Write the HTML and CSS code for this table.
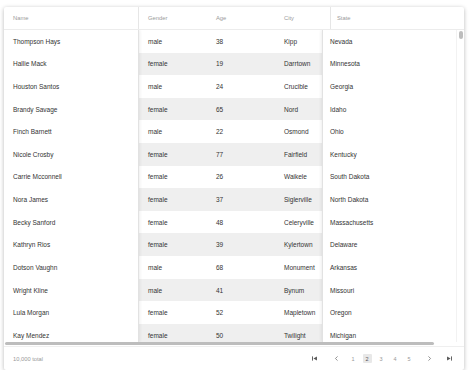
FILE: index.html
```html
<!DOCTYPE html>
<html>
<head>
<meta charset="utf-8">
<link rel="stylesheet" href="styles.css">
</head>
<body>
<div class="card">
  <div class="thead">
    <div class="th-left"><span class="th">Name</span></div>
    <div class="th-mid">
      <span class="th col">Gender</span>
      <span class="th col">Age</span>
      <span class="th col">City</span>
    </div>
    <div class="th-right"><span class="th">State</span></div>
  </div>
  <div class="tbody">
    <div class="pin-left">
      <div class="cell">Thompson Hays</div>
      <div class="cell">Hallie Mack</div>
      <div class="cell">Houston Santos</div>
      <div class="cell">Brandy Savage</div>
      <div class="cell">Finch Barnett</div>
      <div class="cell">Nicole Crosby</div>
      <div class="cell">Carrie Mcconnell</div>
      <div class="cell">Nora James</div>
      <div class="cell">Becky Sanford</div>
      <div class="cell">Kathryn Rios</div>
      <div class="cell">Dotson Vaughn</div>
      <div class="cell">Wright Kline</div>
      <div class="cell">Lula Morgan</div>
      <div class="cell">Kay Mendez</div>
    </div>
    <div class="mid">
      <div class="row"><span class="c">male</span><span class="c">38</span><span class="c">Kipp</span></div>
      <div class="row odd"><span class="c">female</span><span class="c">19</span><span class="c">Darrtown</span></div>
      <div class="row"><span class="c">male</span><span class="c">24</span><span class="c">Crucible</span></div>
      <div class="row odd"><span class="c">female</span><span class="c">65</span><span class="c">Nord</span></div>
      <div class="row"><span class="c">male</span><span class="c">22</span><span class="c">Osmond</span></div>
      <div class="row odd"><span class="c">female</span><span class="c">77</span><span class="c">Fairfield</span></div>
      <div class="row"><span class="c">female</span><span class="c">26</span><span class="c">Waikele</span></div>
      <div class="row odd"><span class="c">female</span><span class="c">37</span><span class="c">Siglerville</span></div>
      <div class="row"><span class="c">female</span><span class="c">48</span><span class="c">Celeryville</span></div>
      <div class="row odd"><span class="c">female</span><span class="c">39</span><span class="c">Kylertown</span></div>
      <div class="row"><span class="c">male</span><span class="c">68</span><span class="c">Monument</span></div>
      <div class="row odd"><span class="c">male</span><span class="c">41</span><span class="c">Bynum</span></div>
      <div class="row"><span class="c">female</span><span class="c">52</span><span class="c">Mapletown</span></div>
      <div class="row odd"><span class="c">female</span><span class="c">50</span><span class="c">Twilight</span></div>
    </div>
    <div class="pin-right">
      <div class="cell">Nevada</div>
      <div class="cell">Minnesota</div>
      <div class="cell">Georgia</div>
      <div class="cell">Idaho</div>
      <div class="cell">Ohio</div>
      <div class="cell">Kentucky</div>
      <div class="cell">South Dakota</div>
      <div class="cell">North Dakota</div>
      <div class="cell">Massachusetts</div>
      <div class="cell">Delaware</div>
      <div class="cell">Arkansas</div>
      <div class="cell">Missouri</div>
      <div class="cell">Oregon</div>
      <div class="cell">Michigan</div>
    </div>
    <div class="vscroll"><div class="vthumb"></div></div>
  </div>
  <div class="hscroll"><div class="hthumb"></div></div>
  <div class="footer">
    <span class="total">10,000 total</span>
    <div class="pager">
      <span class="pbtn icon">
        <svg viewBox="0 0 10 10" width="7" height="7"><rect x="1.5" y="2" width="1.3" height="6" fill="#555"/><path d="M8.5 2 L3.5 5 L8.5 8 Z" fill="#555"/></svg>
      </span>
      <span class="pbtn icon gap">
        <svg viewBox="0 0 10 10" width="7" height="7"><path d="M6.5 2 L3.5 5 L6.5 8" fill="none" stroke="#666" stroke-width="1"/></svg>
      </span>
      <span class="page">1</span>
      <span class="page"><span class="sel">2</span></span>
      <span class="page">3</span>
      <span class="page">4</span>
      <span class="page">5</span>
      <span class="pbtn icon next">
        <svg viewBox="0 0 10 10" width="7" height="7"><path d="M3.5 2 L6.5 5 L3.5 8" fill="none" stroke="#666" stroke-width="1"/></svg>
      </span>
      <span class="pbtn icon">
        <svg viewBox="0 0 10 10" width="7" height="7"><path d="M1.5 2 L6.5 5 L1.5 8 Z" fill="#555"/><rect x="7.2" y="2" width="1.3" height="6" fill="#555"/></svg>
      </span>
    </div>
  </div>
</div>
</body>
</html>
```
FILE: styles.css
```css
* { box-sizing: border-box; }
html, body { margin: 0; padding: 0; background: #fff; }
body {
  font-family: "Liberation Sans", Arial, sans-serif;
  color: #333;
  padding: 7px 10px 0 4px;
}
.card {
  width: 460px;
  height: 363px;
  background: #fff;
  border-radius: 2px;
  box-shadow: 0 1px 4px rgba(0,0,0,0.28);
  display: flex;
  flex-direction: column;
  overflow: hidden;
}
.thead {
  height: 23px;
  flex: none;
  display: flex;
  border-bottom: 1px solid #ececec;
}
.th {
  font-size: 5.8px;
  color: #9a9a9a;
}
.th-left {
  width: 135px;
  flex: none;
  display: flex;
  align-items: center;
  padding-left: 9px;
  border-right: 1px solid #e6e6e6;
}
.th-mid {
  flex: 1;
  min-width: 0;
  overflow: hidden;
  display: flex;
  align-items: center;
}
.th-mid .col {
  width: 68px;
  flex: none;
  padding-left: 9px;
}
.th-right {
  width: 134px;
  flex: none;
  display: flex;
  align-items: center;
  padding-left: 6px;
  border-left: 1px solid #e6e6e6;
}
.tbody {
  height: 312px;
  flex: none;
  display: flex;
  overflow: hidden;
}
.cell, .row {
  height: 22.62px;
  display: flex;
  align-items: center;
  font-size: 6.5px;
  color: #333;
  white-space: nowrap;
}
.pin-left {
  width: 135px;
  flex: none;
  padding-left: 9px;
  border-right: 1px solid #e2e2e2;
  box-shadow: 1px 0 3px rgba(0,0,0,0.07);
  position: relative;
  z-index: 1;
  background: #fff;
}
.mid {
  flex: 1;
  min-width: 0;
  overflow: hidden;
}
.row { width: 204px; }
.row.odd { background: #efefef; }
.row .c {
  width: 68px;
  flex: none;
  padding-left: 9px;
}
.pin-right {
  width: 134px;
  flex: none;
  padding-left: 7px;
  border-left: 1px solid #e2e2e2;
  box-shadow: -1px 0 3px rgba(0,0,0,0.07);
  position: relative;
  z-index: 1;
  background: #fff;
}
.vscroll {
  width: 8px;
  flex: none;
  border-left: 1px solid #f2f2f2;
  padding: 1px 0 0 2px;
  background: #fff;
  position: relative;
  z-index: 1;
}
.vthumb {
  width: 4px;
  height: 8px;
  border-radius: 2px;
  background: #bdbdbd;
}
.hscroll {
  height: 4px;
  flex: none;
  padding-left: 1px;
}
.hthumb {
  width: 429px;
  height: 3px;
  border-radius: 2px;
  background: #bdbdbd;
}
.footer {
  flex: 1;
  display: flex;
  align-items: center;
  justify-content: space-between;
  padding: 0 5px 0 9px;
  border-top: 1px solid #efefef;
}
.total {
  font-size: 5.75px;
  color: #999;
}
.pager {
  display: flex;
  align-items: center;
}
.pbtn {
  width: 20px;
  height: 12px;
  display: flex;
  align-items: center;
  justify-content: center;
}
.pbtn.gap { margin-left: 2px; }
.pbtn.next { margin-left: 3px; }
.page {
  width: 14px;
  height: 12px;
  display: flex;
  align-items: center;
  justify-content: center;
  font-size: 5.5px;
  color: #999;
}
.sel {
  width: 9px;
  height: 9px;
  display: flex;
  align-items: center;
  justify-content: center;
  background: #e8e8e8;
  border-radius: 1px;
  color: #555;
}
```
